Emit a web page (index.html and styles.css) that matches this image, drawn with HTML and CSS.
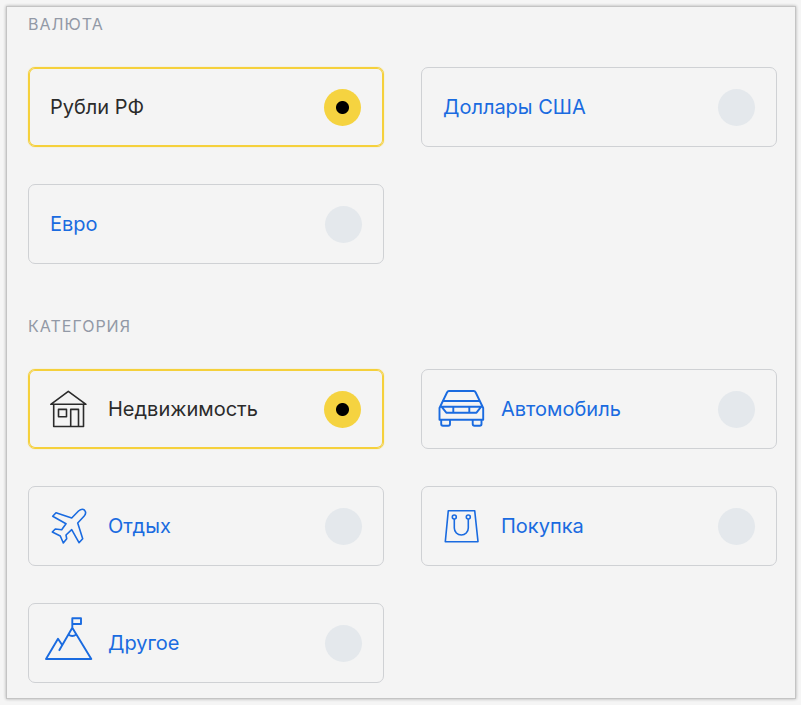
FILE: index.html
```html
<!DOCTYPE html>
<html lang="ru">
<head>
  <meta charset="UTF-8" />
  <meta name="viewport" content="width=device-width, initial-scale=1.0" />
  <title>Валюта и категория</title>
  <link rel="stylesheet" href="styles.css">
</head>
<body>
  <form class="panel">
    <fieldset class="group">
      <legend class="group-title">Валюта</legend>
      <div class="options">
        <label class="option">
          <span class="option-text">Рубли РФ</span>
          <input class="radio" type="radio" name="currency" value="rub" checked />
        </label>
        <label class="option">
          <span class="option-text">Доллары США</span>
          <input class="radio" type="radio" name="currency" value="usd" />
        </label>
        <label class="option">
          <span class="option-text">Евро</span>
          <input class="radio" type="radio" name="currency" value="eur" />
        </label>
      </div>
    </fieldset>

    <fieldset class="group">
      <legend class="group-title">Категория</legend>
      <div class="options">
        <label class="option with-icon">
          <svg class="icon" viewBox="0 0 48 48" aria-hidden="true">
            <path d="M23.3 6.3 L5.8 19.3 H41 Z M8.7 19.3 V41.5 H38.5 V19.3 M13.5 24.4 h8 v7.4 h-8 Z M25.7 41.5 V24.4 H33.5 V41.5" />
          </svg>
          <span class="option-text">Недвижимость</span>
          <input class="radio" type="radio" name="category" value="realty" checked />
        </label>
        <label class="option with-icon">
          <svg class="icon icon-bold" viewBox="0 0 48 48" aria-hidden="true">
            <path d="M1.5 34.7 V23 L9 7.5 Q9.7 6 11 6 H35.7 Q37 6 37.7 7.5 L45.2 23 V34.7 Z M4.5 16 H42 M2 21.8 H45 M3.7 21.8 L8.3 27.7 H38.5 L43 21.8 M15.3 21.8 V27.7 M31.3 21.8 V27.7" />
            <path d="M3.2 34.7 V39 Q3.2 40.7 5 40.7 H10.2 Q12 40.7 12 39 V34.7 M34.7 34.7 V39 Q34.7 40.7 36.5 40.7 H41.7 Q43.5 40.7 43.5 39 V34.7" />
          </svg>
          <span class="option-text">Автомобиль</span>
          <input class="radio" type="radio" name="category" value="car" />
        </label>
        <label class="option with-icon">
          <svg class="icon" viewBox="0 0 48 48" aria-hidden="true">
            <path d="M11 10.7 L26.7 16 L33.5 9 C36 6.8 38 6.8 39.5 8.2 C41 9.8 41 12 39 14.3 L32.7 21 L37.7 36.7 L34 40.7 L26.7 27.7 L21 33 L21.7 36.7 L18.3 41 L15.3 34 L7.3 30 L10.3 27 L16.7 27.7 L21 21.7 L7.7 14.3 Z" />
          </svg>
          <span class="option-text">Отдых</span>
          <input class="radio" type="radio" name="category" value="vacation" />
        </label>
        <label class="option with-icon">
          <svg class="icon" viewBox="0 0 48 48" aria-hidden="true">
            <path d="M10.3 8.7 H36.7 L40 39.7 H7.3 Z M16.3 17 V26 A7 7 0 0 0 30.3 26 V17" />
            <circle cx="16.3" cy="15" r="2" />
            <circle cx="30.3" cy="15" r="2" />
          </svg>
          <span class="option-text">Покупка</span>
          <input class="radio" type="radio" name="category" value="purchase" />
        </label>
        <label class="option with-icon">
          <svg class="icon icon-bold" viewBox="0 0 48 48" aria-hidden="true">
            <path d="M14 31.7 L27.3 8.7 L46.3 40 H1 L13 19.7 L17 25.7 M27.3 8.7 V-0.7 H36 V5 H27.3 M23.3 15.5 Q27.3 18.5 31.3 15.5" />
          </svg>
          <span class="option-text">Другое</span>
          <input class="radio" type="radio" name="category" value="other" />
        </label>
      </div>
    </fieldset>
  </form>
</body>
</html>
```
FILE: styles.css
```css
* {
  box-sizing: border-box;
}

body {
  margin: 0;
  padding: 6px 5px 6px 6px;
  background: #f5f5f5;
  color: #2b2b2b;
  font-family: Inter, "Liberation Sans", sans-serif;
}

.panel {
  display: flex;
  flex-direction: column;
  gap: 52px;
  padding: 7px 18px 15px 21px;
  background: #f4f4f4;
  border: 1px solid #c4c4c4;
  box-shadow: 0 0 3px rgba(0, 0, 0, 0.3);
}

.group {
  min-width: 0;
  margin: 0;
  padding: 0;
  border: 0;
}

.group-title {
  padding: 0;
  color: #9299a6;
  font-size: 16px;
  line-height: 20px;
  letter-spacing: 1px;
  text-transform: uppercase;
}

.options {
  display: grid;
  grid-template-columns: repeat(2, 1fr);
  gap: 37px;
  padding-top: 33px;
}

.option {
  display: flex;
  align-items: center;
  gap: 15px;
  height: 80px;
  padding: 0 21px;
  border: 1px solid #cfd1d4;
  border-radius: 7px;
  color: #1a6be0;
  font-size: 20px;
  line-height: 28px;
  cursor: pointer;
}

.with-icon {
  padding-left: 16px;
}

.option:has(.radio:checked) {
  padding-right: 22px;
  border-color: #f5d03b;
  box-shadow: inset 0 0 0 1px #f5d03b, 0 0 1px #f5d03b;
  color: #2b2b2b;
}

.option-text {
  flex: 1;
}

.icon {
  flex: none;
  width: 48px;
  height: 48px;
  overflow: visible;
  fill: none;
  stroke: currentColor;
  stroke-width: 1.6;
  stroke-linejoin: round;
}

.icon-bold {
  stroke-width: 1.9;
}

.radio {
  appearance: none;
  flex: none;
  width: 37px;
  height: 37px;
  margin: 0;
  border-radius: 50%;
  background: #e4e8ec;
  cursor: pointer;
}

.radio:checked {
  background: radial-gradient(circle, #000 6px, #f5d340 7px);
}
```
